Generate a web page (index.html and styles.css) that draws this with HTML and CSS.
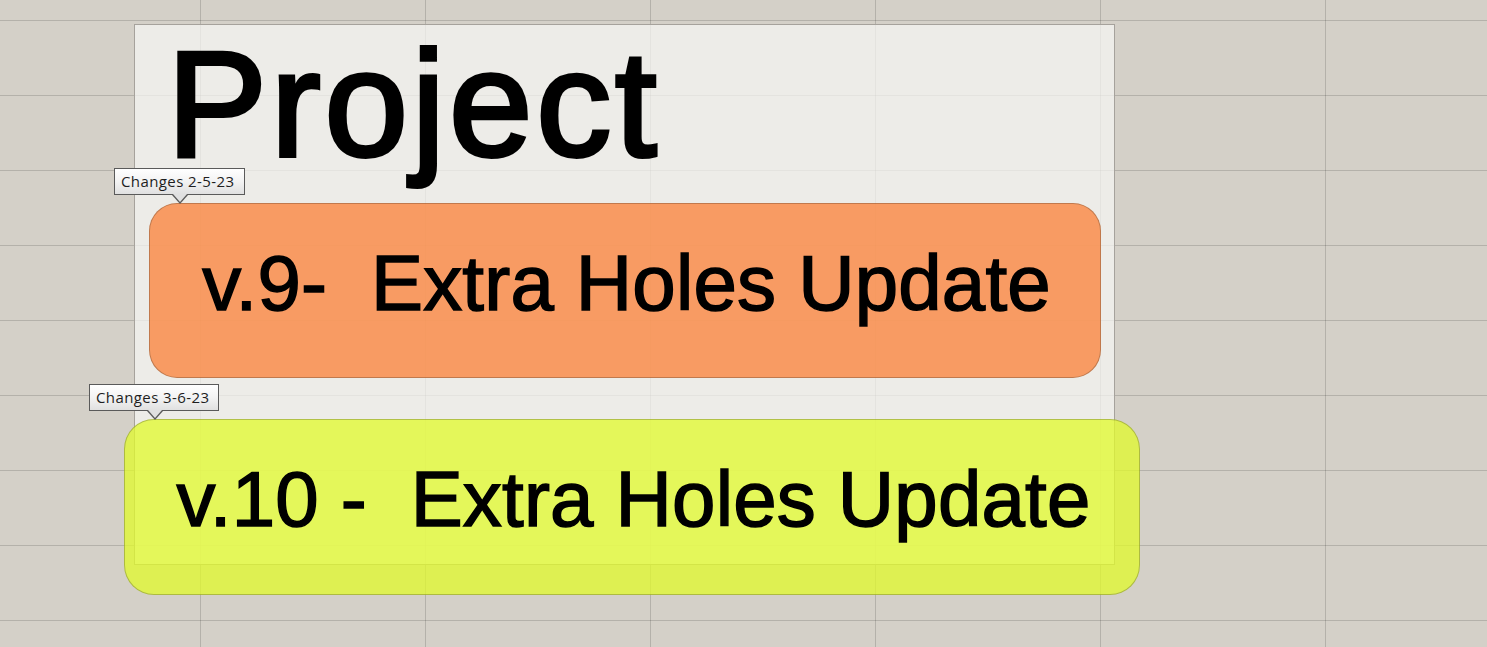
FILE: index.html
```html
<!DOCTYPE html>
<html>
<head>
<meta charset="utf-8">
<title>Canvas</title>
<link rel="stylesheet" href="styles.css">
</head>
<body>
<div class="canvas">
  <div class="panel">
    <div class="scribble">Project</div>
  </div>
  <div class="group group-orange">
    <div class="group-text">v.9-&nbsp; Extra Holes Update</div>
  </div>
  <div class="group group-yellow">
    <div class="group-text">v.10 -&nbsp; Extra Holes Update</div>
  </div>
  <div class="tip tip-one">Changes 2-5-23</div>
  <div class="tip tip-two">Changes 3-6-23</div>
</div>
</body>
</html>
```
FILE: styles.css
```css
html, body {
  margin: 0;
  padding: 0;
}
body {
  width: 1487px;
  height: 647px;
  overflow: hidden;
  font-family: "Liberation Sans", Arial, sans-serif;
}
.canvas {
  position: relative;
  width: 1487px;
  height: 647px;
  background-color: #d4d0c8;
  background-image:
    linear-gradient(to right, rgba(0,0,0,0.15) 1px, transparent 1px),
    linear-gradient(to bottom, rgba(0,0,0,0.15) 1px, transparent 1px);
  background-size: 225px 75px;
  background-position: 200px 20px;
}
.panel {
  position: absolute;
  left: 134px;
  top: 24px;
  width: 981px;
  height: 541px;
  box-sizing: border-box;
  border: 1px solid #a6a29c;
  background: rgba(246, 247, 244, 0.72);
  padding: 0 0 0 32px;
}
.scribble {
  margin-top: 4px;
  font-size: 150px;
  line-height: 1;
  color: #000;
  letter-spacing: 3.8px;
  -webkit-text-stroke: 4px #000;
}
.group {
  position: absolute;
  display: flex;
  align-items: center;
  justify-content: center;
  box-sizing: border-box;
  padding: 0 0 16px 3px;
  border: 1px solid rgba(0, 0, 0, 0.22);
}
.group-orange {
  left: 149px;
  top: 203px;
  width: 952px;
  height: 175px;
  border-radius: 28px;
  background: rgba(250, 135, 65, 0.8);
}
.group-yellow {
  left: 124px;
  top: 419px;
  width: 1016px;
  height: 176px;
  border-radius: 30px;
  background: rgba(225, 250, 45, 0.76);
}
.group-text {
  font-size: 78px;
  line-height: 1;
  color: #000;
  white-space: nowrap;
  letter-spacing: 0.2px;
  -webkit-text-stroke: 1.5px #000;
}
.tip {
  position: absolute;
  box-sizing: border-box;
  height: 27px;
  padding: 0 0 1px 6px;
  display: flex;
  align-items: center;
  font-family: "Open Sans", "Noto Sans", sans-serif;
  font-size: 15px;
  letter-spacing: 0.4px;
  color: #1e1e1e;
  border: 1px solid #5a5a5a;
  background: linear-gradient(to bottom, #ffffff 0%, #f3f3f3 50%, #e0e0e0 100%);
  white-space: nowrap;
}
.tip::before,
.tip::after {
  content: "";
  position: absolute;
  width: 0;
  height: 0;
  border-style: solid;
}
.tip::before {
  left: 57px;
  bottom: -10px;
  border-width: 9px 8px 0 8px;
  border-color: #5a5a5a transparent transparent transparent;
}
.tip::after {
  left: 58px;
  bottom: -8px;
  border-width: 8px 7px 0 7px;
  border-color: #e0e0e0 transparent transparent transparent;
}
.tip-one {
  left: 114px;
  top: 168px;
  width: 131px;
}
.tip-two {
  left: 89px;
  top: 384px;
  width: 130px;
}
```
